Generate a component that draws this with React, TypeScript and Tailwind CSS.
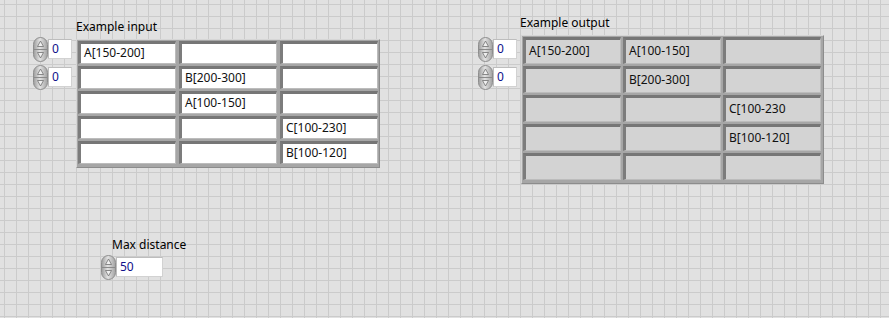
import React from "react";

const font = { fontFamily: '"Noto Sans", "Open Sans", sans-serif' };

function Spinner() {
  return (
    <svg width="15" height="25" viewBox="0 0 15 25">
      <defs>
        <linearGradient id="sg" x1="0" y1="0" x2="1" y2="0">
          <stop offset="0" stopColor="#9c9c9c" />
          <stop offset="0.45" stopColor="#e2e2e2" />
          <stop offset="1" stopColor="#a2a2a2" />
        </linearGradient>
      </defs>
      <rect x="0.5" y="0.5" width="14" height="24" rx="7" fill="url(#sg)" stroke="#8e8e8e" />
      <line x1="1" y1="12.5" x2="14" y2="12.5" stroke="#8a8a8a" />
      <path d="M7.5 4 L10.5 9.5 L4.5 9.5 Z" fill="#efefef" stroke="#707070" strokeWidth="0.8" />
      <path d="M7.5 21 L10.5 15.5 L4.5 15.5 Z" fill="#efefef" stroke="#707070" strokeWidth="0.8" />
    </svg>
  );
}

function Numeric({ value, w }: { value: string; w: number }) {
  return (
    <div className="flex items-start">
      <Spinner />
      <div
        className="mt-[2px] h-[20px] bg-white border border-[#d2d2d2] border-t-[#bdbdbd] border-l-[#bdbdbd] pl-[3px] text-[12px] leading-[18px] text-[#10108a]"
        style={{ width: w }}
      >
        {value}
      </div>
    </div>
  );
}

function Table({ data, output }: { data: string[][]; output?: boolean }) {
  return (
    <div
      className={
        "border border-[#d6d6d6] border-r-[#8c8c8c] border-b-[#8c8c8c] bg-[#a6a6a6] pl-[1px] pt-[1px] pb-[3px] " +
        (output ? "pr-[2px]" : "pr-[1px]")
      }
    >
      <div className={"grid grid-cols-[98px_98px_98px] gap-y-[2px] " + (output ? "gap-x-[2px]" : "gap-x-[3px]")}>
        {data.flat().map((t, i) => (
          <div
            key={i}
            className={
              "border-t-[3px] border-l-[3px] border-t-[#767676] border-l-[#7c7c7c] border-b border-r border-b-[#bcbcbc] border-r-[#bcbcbc] pl-[3px] text-[12px] text-[#111] " +
              (output ? "h-[27px] bg-[#d3d3d3] leading-[22px]" : "h-[23px] bg-white leading-[18px]")
            }
          >
            {t}
          </div>
        ))}
      </div>
    </div>
  );
}

const inputData = [
  ["A[150-200]", "", ""],
  ["", "B[200-300]", ""],
  ["", "A[100-150]", ""],
  ["", "", "C[100-230]"],
  ["", "", "B[100-120]"],
];

const outputData = [
  ["A[150-200]", "A[100-150]", ""],
  ["", "B[200-300]", ""],
  ["", "", "C[100-230"],
  ["", "", "B[100-120]"],
  ["", "", ""],
];

export default function App() {
  return (
    <div
      className="relative w-[889px] h-[318px] overflow-hidden bg-[#e1e1e1] bg-[linear-gradient(to_right,#cbcbcb_1px,transparent_1px),linear-gradient(to_bottom,#cbcbcb_1px,transparent_1px)] bg-[length:12px_12px] bg-[position:4px_4px] text-black"
      style={font}
    >
      {/* Example input control */}
      <div className="absolute left-[33px] top-[19px] flex flex-col">
        <div className="pl-[43px] text-[12px] leading-[16px]">Example input</div>
        <div className="flex items-start gap-[4px]">
          <div className="mt-[2px] flex flex-col gap-[3px]">
            <Numeric value="0" w={24} />
            <Numeric value="0" w={24} />
          </div>
          <div className="mt-[4px]">
            <Table data={inputData} />
          </div>
        </div>
      </div>

      {/* Example output indicator */}
      <div className="absolute left-[478px] top-[15px] flex flex-col">
        <div className="pl-[42px] text-[12px] leading-[16px]">Example output</div>
        <div className="flex items-start gap-[4px]">
          <div className="mt-[6px] flex flex-col gap-[3px]">
            <Numeric value="0" w={24} />
            <Numeric value="0" w={24} />
          </div>
          <div className="mt-[4px]">
            <Table data={outputData} output />
          </div>
        </div>
      </div>

      {/* Max distance control */}
      <div className="absolute left-[101px] top-[237px] flex flex-col gap-[2px]">
        <div className="pl-[11px] text-[12px] leading-[16px]">Max distance</div>
        <Numeric value="50" w={47} />
      </div>
    </div>
  );
}
